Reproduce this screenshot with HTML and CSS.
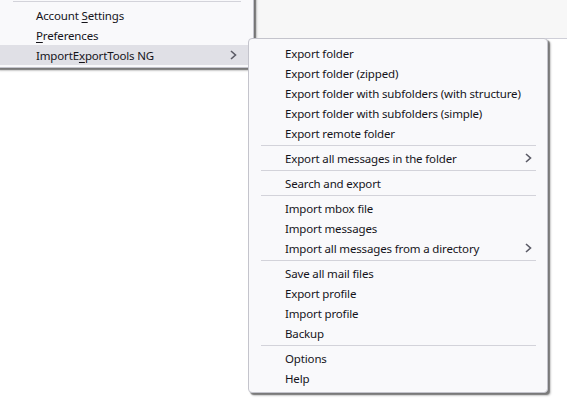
FILE: index.html
```html
<!DOCTYPE html>
<html>
<head>
<meta charset="utf-8">
<link rel="stylesheet" href="styles.css">
</head>
<body>
<div class="desk">
  <div class="toolbar"></div>

  <div class="menu parent">
    <div class="sep"></div>
    <div class="item"><span class="label">Account <u>S</u>ettings</span></div>
    <div class="item"><span class="label"><u>P</u>references</span></div>
    <div class="item active"><span class="label">ImportE<u>x</u>portTools NG</span><span class="chev"><svg width="7" height="10" viewBox="0 0 7 10"><path d="M1 1l4.5 4L1 9" fill="none" stroke="#5b5b66" stroke-width="1.6"/></svg></span></div>
  </div>

  <div class="menu sub">
    <div class="item"><span class="label">Export folder</span></div>
    <div class="item"><span class="label">Export folder (zipped)</span></div>
    <div class="item"><span class="label">Export folder with subfolders (with structure)</span></div>
    <div class="item"><span class="label">Export folder with subfolders (simple)</span></div>
    <div class="item"><span class="label">Export remote folder</span></div>
    <div class="sep"></div>
    <div class="item"><span class="label">Export all messages in the folder</span><span class="chev"><svg width="7" height="10" viewBox="0 0 7 10"><path d="M1 1l4.5 4L1 9" fill="none" stroke="#5b5b66" stroke-width="1.6"/></svg></span></div>
    <div class="sep"></div>
    <div class="item"><span class="label">Search and export</span></div>
    <div class="sep"></div>
    <div class="item"><span class="label">Import mbox file</span></div>
    <div class="item"><span class="label">Import messages</span></div>
    <div class="item"><span class="label">Import all messages from a directory</span><span class="chev"><svg width="7" height="10" viewBox="0 0 7 10"><path d="M1 1l4.5 4L1 9" fill="none" stroke="#5b5b66" stroke-width="1.6"/></svg></span></div>
    <div class="sep"></div>
    <div class="item"><span class="label">Save all mail files</span></div>
    <div class="item"><span class="label">Export profile</span></div>
    <div class="item"><span class="label">Import profile</span></div>
    <div class="item"><span class="label">Backup</span></div>
    <div class="sep"></div>
    <div class="item"><span class="label">Options</span></div>
    <div class="item"><span class="label">Help</span></div>
  </div>
</div>
</body>
</html>
```

FILE: styles.css
```css
html, body {
  margin: 0;
  padding: 0;
  background: #ffffff;
}
body {
  font-family: "Noto Sans", "Open Sans", sans-serif;
  font-size: 11.5px;
  letter-spacing: -0.15px;
  color: #15141a;
}
.desk {
  position: relative;
  width: 567px;
  height: 409px;
  overflow: hidden;
}
.toolbar {
  height: 38px;
  background: #f7f7f7;
  border-bottom: 1px solid #cfcfd8;
}
.menu {
  position: absolute;
  background: #f9f9fb;
  border: 1px solid #c4c4cc;
  border-radius: 4px;
  box-shadow: 2px 2px 1px rgba(0,0,0,0.42), 3px 3px 2px rgba(0,0,0,0.18);
  display: flex;
  flex-direction: column;
}
.parent {
  left: -6px;
  top: -20px;
  width: 258px;
  padding: 0 0 2px 0;
  border-radius: 0 0 4px 4px;
}
.parent .sep {
  margin: 20px 12px 3px 18px;
}
.parent .item {
  padding-left: 41px;
  padding-right: 16px;
}
.parent .item.active {
  background: #e0e0e6;
  margin: 0 1px;
  padding-left: 40px;
  padding-right: 15px;
}
.sub {
  left: 248px;
  top: 38px;
  width: 298px;
  padding: 4px 0;
}
.item {
  height: 20px;
  display: flex;
  align-items: center;
  justify-content: space-between;
  padding-left: 36px;
  padding-right: 15px;
  white-space: nowrap;
}
.label u {
  text-decoration: underline;
  text-underline-offset: 2px;
}
.chev {
  display: flex;
  align-items: center;
}
.sep {
  height: 1px;
  background: #d3d3da;
  margin: 2px 11px 2px 12px;
}
```
